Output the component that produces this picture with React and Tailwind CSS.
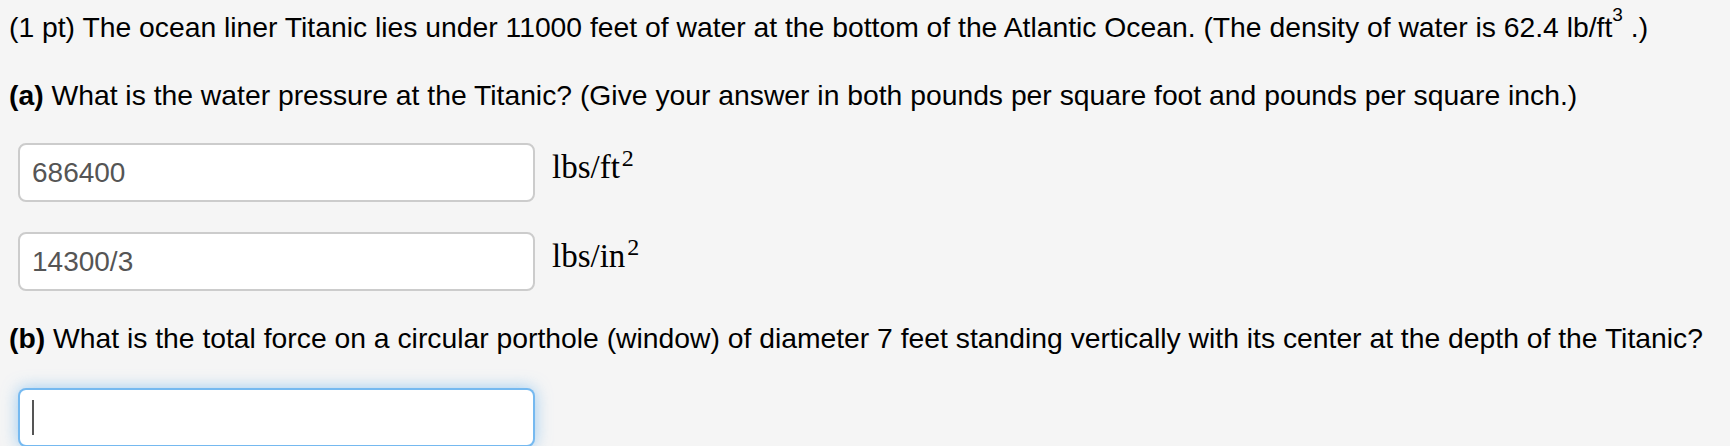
import React from 'react';

function AnswerBox({ value, unit, focused }) {
    return (
        <div className="flex items-start gap-[17px]">
            <div
                className={`w-[517px] h-[59px] shrink-0 bg-white rounded-[8px] border-2 flex items-center px-[12px] ${focused ? 'border-[rgba(82,168,236,0.8)] shadow-[0_0_16px_rgba(82,168,236,0.55)]' : 'border-[#cccccc]'}`}
            >
                {focused ? (
                    <span className="w-[2px] h-[35px] bg-[#555555]"></span>
                ) : (
                    <span className="text-[28px] leading-[34px] text-[#555555]">{value}</span>
                )}
            </div>
            {unit && (
                <span className="font-['Liberation_Serif','Times_New_Roman',serif] text-[33px] text-black leading-none mt-[8px] whitespace-nowrap">
                    {unit}<sup className="text-[24px] ml-[2px]">2</sup>
                </span>
            )}
        </div>
    );
}

export default function App() {
    return (
        <div className="w-[1730px] h-[446px] bg-[#f5f5f5] font-['Liberation_Sans',Arial,sans-serif] text-black overflow-hidden">
            <div className="pl-[9px] pt-[10px] flex flex-col">
                <p className="text-[28.3px] leading-[34px] whitespace-nowrap">
                    (1 pt) The ocean liner Titanic lies under 11000 feet of water at the bottom of the Atlantic Ocean. (The density of water is 62.4 lb/ft<sup className="text-[19px] -top-[16px]">3</sup> .)
                </p>
                <p className="text-[28.3px] leading-[34px] mt-[34px] whitespace-nowrap">
                    <b>(a)</b> What is the water pressure at the Titanic? (Give your answer in both pounds per square foot and pounds per square inch.)
                </p>
                <div className="pl-[9px] mt-[31px] flex flex-col gap-[30px]">
                    <AnswerBox value="686400" unit="lbs/ft" />
                    <AnswerBox value="14300/3" unit="lbs/in" />
                </div>
                <p className="text-[28.3px] leading-[34px] mt-[30px] whitespace-nowrap">
                    <b>(b)</b> What is the total force on a circular porthole (window) of diameter 7 feet standing vertically with its center at the depth of the Titanic?
                </p>
                <div className="pl-[9px] mt-[33px]">
                    <AnswerBox focused />
                </div>
            </div>
        </div>
    );
}
